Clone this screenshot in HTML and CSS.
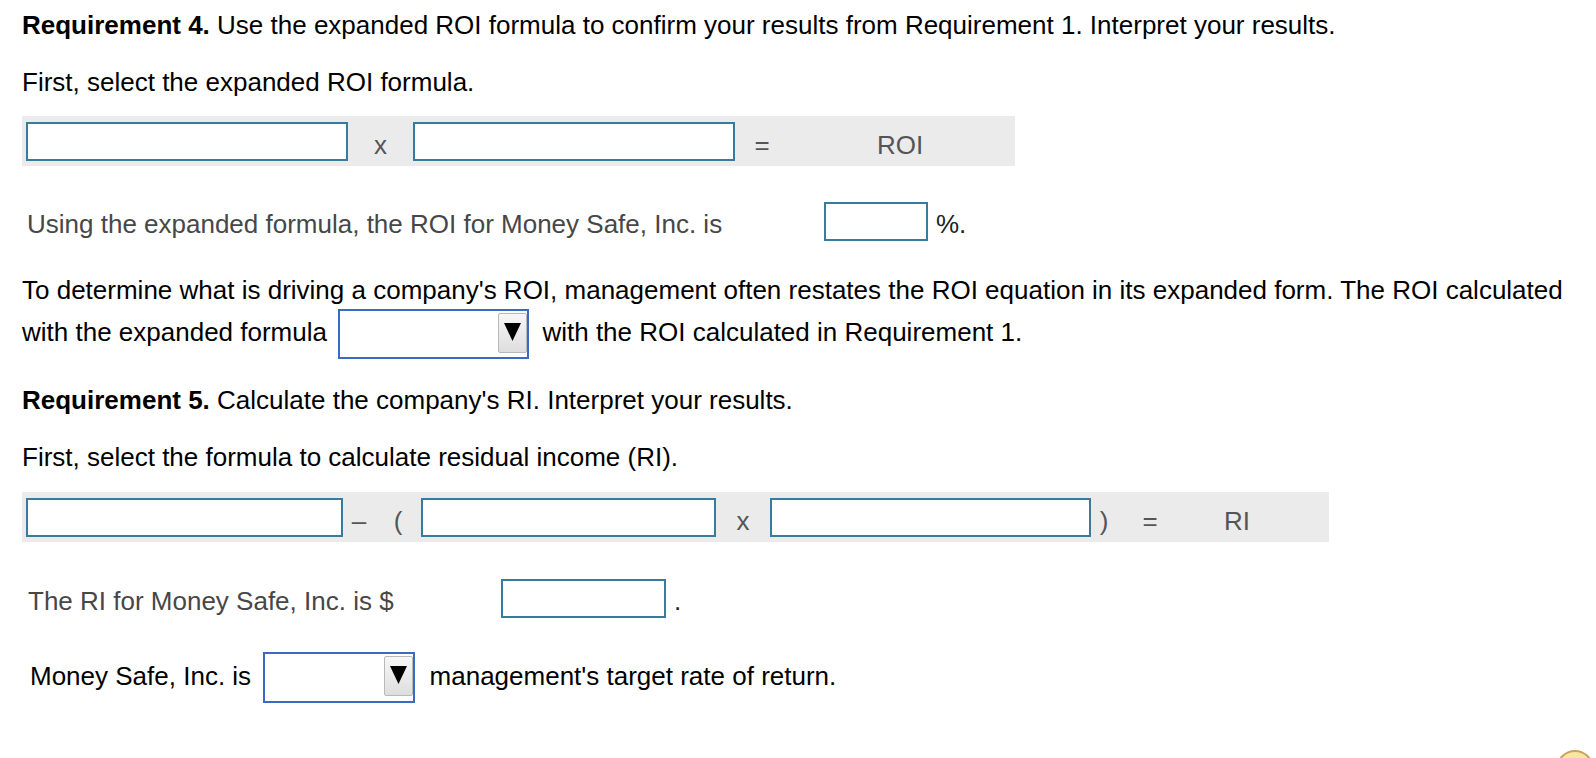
FILE: index.html
```html
<!DOCTYPE html>
<html lang="en">
<head>
<meta charset="utf-8">
<title>Requirements 4 and 5</title>
<link rel="stylesheet" href="styles.css">
</head>
<body>
<div class="page">
  <p class="title"><b>Requirement 4.</b> Use the expanded ROI formula to confirm your results from Requirement 1. Interpret your results.</p>
  <p class="lead">First, select the expanded ROI formula.</p>

  <div class="formula formula-roi">
    <span class="field f-roi-a"></span>
    <span class="op op-roi-x">x</span>
    <span class="field f-roi-b"></span>
    <span class="op op-roi-eq">=</span>
    <span class="op op-roi-res">ROI</span>
  </div>

  <div class="answer answer-roi">
    <span class="label label-roi">Using the expanded formula, the ROI for Money Safe, Inc. is</span>
    <span class="field f-pct"></span>
    <span class="suffix">%.</span>
  </div>

  <p class="para para-roi">To determine what is driving a company's ROI, management often restates the ROI equation in its expanded form. The ROI calculated<br>with the expanded formula <span class="select select-roi"><span class="select-btn"><svg width="17" height="18" viewBox="0 0 17 18"><polygon points="0,0 17,0 8.5,18" fill="#000"/></svg></span></span> with the ROI calculated in Requirement 1.</p>

  <p class="title title-5"><b>Requirement 5.</b> Calculate the company's RI. Interpret your results.</p>
  <p class="lead">First, select the formula to calculate residual income (RI).</p>

  <div class="formula formula-ri">
    <span class="field f-ri-a"></span>
    <span class="op op-ri-minus">&ndash;</span>
    <span class="op op-ri-open">(</span>
    <span class="field f-ri-b"></span>
    <span class="op op-ri-x">x</span>
    <span class="field f-ri-c"></span>
    <span class="op op-ri-close">)</span>
    <span class="op op-ri-eq">=</span>
    <span class="op op-ri-res">RI</span>
  </div>

  <div class="answer answer-ri">
    <span class="label label-ri">The RI for Money Safe, Inc. is $</span>
    <span class="field f-ri-val"></span>
    <span class="suffix">.</span>
  </div>

  <p class="para para-ri">Money Safe, Inc. is <span class="select select-ri"><span class="select-btn"><svg width="17" height="18" viewBox="0 0 17 18"><polygon points="0,0 17,0 8.5,18" fill="#000"/></svg></span></span> management's target rate of return.</p>
</div>
<div class="help-bubble"></div>
</body>
</html>
```
FILE: styles.css
```css
* { box-sizing: border-box; }

html, body {
  margin: 0;
  padding: 0;
  background: #fff;
}

body {
  font-family: "Liberation Sans", Arial, Helvetica, sans-serif;
  font-size: 26px;
  line-height: 42px;
  color: #000;
}

.page {
  padding: 4px 0 20px 22px;
}

p { margin: 0; }

.title b { font-weight: bold; }

.title-5 { margin-top: 26px; }

.lead { margin-top: 15px; }

/* formula bars */
.formula {
  display: flex;
  align-items: center;
  height: 50px;
  background: #ebebeb;
  padding: 0 4px;
  margin-top: 13px;
}

.formula-roi { width: 993px; }
.formula-ri { width: 1307px; margin-top: 14px; }

.field {
  display: block;
  flex: none;
  height: 39px;
  border: 2px solid #3a7b9c;
  background: #fff;
}

.op {
  flex: none;
  align-self: stretch;
  text-align: center;
  color: #555;
  line-height: 42px;
  padding-top: 8px;
}

.f-roi-a { width: 322px; }
.op-roi-x { width: 65px; }
.f-roi-b { width: 322px; }
.op-roi-eq { width: 54px; }
.op-roi-res { width: 222px; }

.f-ri-a { width: 317px; }
.op-ri-minus { width: 32px; }
.op-ri-open { width: 46px; }
.f-ri-b { width: 295px; }
.op-ri-x { width: 54px; }
.f-ri-c { width: 321px; }
.op-ri-close { width: 26px; }
.op-ri-eq { width: 66px; }
.op-ri-res { width: 108px; }

/* answer rows */
.answer {
  display: flex;
  align-items: flex-start;
  height: 45px;
  padding-left: 5px;
}

.answer-roi { margin-top: 34px; }
.answer-ri { margin-top: 35px; }

.label {
  flex: none;
  margin-top: 3px;
  color: #474747;
}

.label-roi { width: 797px; }
.label-ri { width: 474px; padding-left: 1px; }

.answer .field { margin-top: 2px; }
.f-pct { width: 104px; }
.f-ri-val { width: 165px; }

.suffix {
  margin-left: 8px;
  margin-top: 3px;
  color: #222;
}

/* paragraphs with dropdowns */
.para-roi { margin-top: 24px; }
.para-ri { margin-top: 33px; padding-left: 8px; }

.select {
  display: inline-flex;
  justify-content: flex-end;
  align-items: flex-start;
  vertical-align: top;
  border: 2px solid #3d68c4;
  background: #fff;
}

.select-roi {
  width: 191px;
  height: 50px;
  margin: -2px 6px -6px 4px;
}

.select-ri {
  width: 152px;
  height: 51px;
  margin: -3px 7px -6px 5px;
}

.select-btn {
  display: flex;
  align-items: center;
  justify-content: center;
  width: 29px;
  height: 40px;
  margin-top: 2px;
  border: 1px solid #b9b9b9;
  border-radius: 2px;
  background: linear-gradient(#f7f7f7, #dedede);
}

.select-btn svg { display: block; margin-top: -3px; }

/* floating help bubble in corner */
.help-bubble {
  position: fixed;
  left: 1556px;
  top: 750px;
  width: 38px;
  height: 38px;
  border-radius: 50%;
  background: #f8e6a0;
  border: 2px solid #c9a45e;
}
```
